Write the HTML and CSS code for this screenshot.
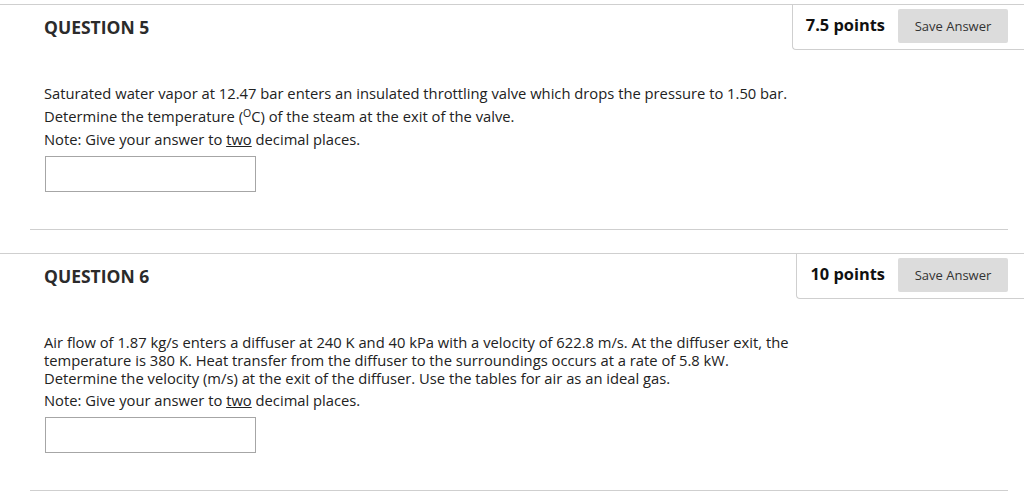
FILE: index.html
```html
<!DOCTYPE html>
<html>
<head>
<meta charset="utf-8">
<link rel="stylesheet" href="styles.css">
</head>
<body>
<div class="page">
  <section class="question">
    <div class="q-head">
      <h3 class="q-title">QUESTION 5</h3>
      <div class="points-box">
        <span class="points">7.5 points</span>
        <button class="save">Save Answer</button>
      </div>
    </div>
    <div class="q-body">
      <p>Saturated water vapor at 12.47 bar enters an insulated throttling valve which drops the pressure to 1.50 bar.</p>
      <p>Determine the temperature (<sup>O</sup>C) of the steam at the exit of the valve.</p>
      <p>Note: Give your answer to <u>two</u> decimal places.</p>
      <input class="answer" type="text">
    </div>
    <hr class="sep">
  </section>
  <section class="question">
    <div class="q-head">
      <h3 class="q-title">QUESTION 6</h3>
      <div class="points-box">
        <span class="points">10 points</span>
        <button class="save">Save Answer</button>
      </div>
    </div>
    <div class="q-body">
      <p class="wrap">Air flow of 1.87 kg/s enters a diffuser at 240 K and 40 kPa with a velocity of 622.8 m/s. At the diffuser exit, the temperature is 380 K. Heat transfer from the diffuser to the surroundings occurs at a rate of 5.8 kW. Determine the velocity (m/s) at the exit of the diffuser. Use the tables for air as an ideal gas.</p>
      <p>Note: Give your answer to <u>two</u> decimal places.</p>
      <input class="answer" type="text">
    </div>
    <hr class="sep">
  </section>
</div>
</body>
</html>
```
FILE: styles.css
```css
html, body {
  margin: 0;
  padding: 0;
  background: #fff;
}
body {
  font-family: "Open Sans", "DejaVu Sans", sans-serif;
  color: #222;
}
.page {
  padding-top: 4px;
}
.question {
  border-top: 1px solid #cfcfcf;
}
.q-head {
  display: flex;
  justify-content: space-between;
  align-items: flex-start;
}
.q-title {
  margin: 0;
  padding: 11px 0 0 44px;
  font-size: 17.5px;
  line-height: 22px;
  font-weight: 700;
  color: #2b2b2b;
}
.points-box {
  display: flex;
  align-items: center;
  gap: 13px;
  padding: 4px 16px 6px 13px;
  border-left: 1px solid #cfcfcf;
  border-bottom: 1px solid #cfcfcf;
  border-bottom-left-radius: 4px;
}
.points {
  font-size: 16.4px;
  font-weight: 700;
  color: #111;
  line-height: 20px;
  margin-top: -2px;
}
.save {
  width: 110px;
  height: 34px;
  border: none;
  border-radius: 2px;
  background: #dcdcdc;
  color: #333;
  font-family: "Open Sans", "DejaVu Sans", sans-serif;
  font-size: 13px;
  padding: 0;
}
.q-body {
  padding: 34px 0 0 44px;
}
.q-body p {
  margin: 0 0 5px;
  font-size: 14.75px;
  line-height: 18px;
}
.q-body p.wrap {
  width: 760px;
  margin-bottom: 4px;
}
.q-body sup {
  font-size: 10.5px;
  line-height: 0;
  vertical-align: 5px;
}
.answer {
  display: block;
  box-sizing: border-box;
  width: 211px;
  height: 36px;
  margin: 8px 0 0 1px;
  border: 1px solid #a6a6a6;
  border-radius: 0;
  background: #fff;
}
.sep {
  margin: 37px 16px 23px 30px;
  border: none;
  border-top: 1px solid #cfcfcf;
  height: 0;
}
.question:last-child .sep {
  margin-bottom: 0;
}
```
